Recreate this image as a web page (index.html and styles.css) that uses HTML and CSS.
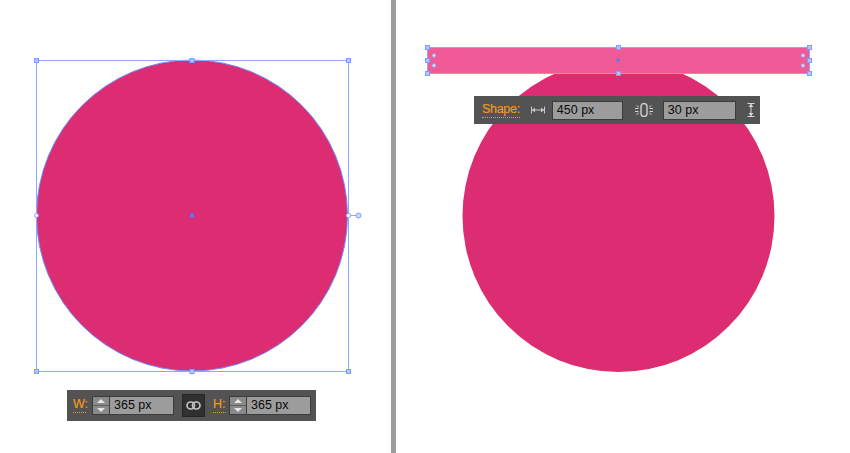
FILE: index.html
```html
<!DOCTYPE html>
<html>
<head>
<meta charset="utf-8">
<link rel="stylesheet" href="styles.css">
</head>
<body>
<div class="stage">
  <section class="panel panel-left">
    <svg class="canvas" width="391" height="453" viewBox="0 0 391 453">
      <circle cx="192" cy="215.5" r="155.5" fill="#dc2d73" stroke="#6f8cff" stroke-width="1"/>
      <rect x="36.5" y="60.5" width="312" height="311" fill="none" stroke="#8ea6ff" stroke-width="1"/>
      <line x1="348" y1="215.5" x2="358" y2="215.5" stroke="#8ea6ff" stroke-width="1"/>
      <circle cx="358.5" cy="215.5" r="2.5" fill="#cdd8ff" stroke="#7f9cff" stroke-width="1"/>
      <circle cx="348.5" cy="215.5" r="2.2" fill="#ffffff" stroke="#7f9cff" stroke-width="1"/>
      <circle cx="36.5" cy="215.5" r="2" fill="#ffffff" stroke="#7f9cff" stroke-width="1"/>
      <g fill="#b5c5ff" stroke="#7f9cff" stroke-width="1">
        <rect x="34.5" y="58.5" width="4" height="4"/>
        <rect x="190" y="58.5" width="4" height="4"/>
        <rect x="346.5" y="58.5" width="4" height="4"/>
        <rect x="34.5" y="369.5" width="4" height="4"/>
        <rect x="190" y="369.5" width="4" height="4"/>
        <rect x="346.5" y="369.5" width="4" height="4"/>
      </g>
      <rect x="190" y="213.5" width="4" height="4" fill="#4a7dff"/>
    </svg>
    <div class="toolbar toolbar-wh">
      <span class="label lab-w">W:</span>
      <span class="spinner"><span class="arr up"></span><span class="arr down"></span></span>
      <span class="field field-w">365 px</span>
      <span class="linkbtn">
        <svg width="15" height="9" viewBox="0 0 15 9"><rect x="1" y="1" width="7.5" height="7" rx="3.5" fill="none" stroke="#c4c4c4" stroke-width="1.7"/><rect x="6.5" y="1" width="7.5" height="7" rx="3.5" fill="none" stroke="#c4c4c4" stroke-width="1.7"/></svg>
      </span>
      <span class="label lab-h">H:</span>
      <span class="spinner"><span class="arr up"></span><span class="arr down"></span></span>
      <span class="field field-w">365 px</span>
    </div>
  </section>
  <div class="divider"></div>
  <section class="panel panel-right">
    <svg class="canvas" width="454" height="453" viewBox="396 0 454 453">
      <circle cx="618.5" cy="216" r="156" fill="#dc2d73"/>
      <rect x="427.5" y="47.5" width="382" height="26" fill="#f05a96" stroke="#8ea6ff" stroke-width="1"/>
      <g fill="#b5c5ff" stroke="#7f9cff" stroke-width="1">
        <rect x="425.5" y="45.5" width="4" height="4"/>
        <rect x="616.5" y="45.5" width="4" height="4"/>
        <rect x="807.5" y="45.5" width="4" height="4"/>
        <rect x="425.5" y="58.5" width="4" height="4"/>
        <rect x="807.5" y="58.5" width="4" height="4"/>
        <rect x="425.5" y="71.5" width="4" height="4"/>
        <rect x="616.5" y="71.5" width="4" height="4"/>
        <rect x="807.5" y="71.5" width="4" height="4"/>
      </g>
      <g fill="#f7d2e2" stroke="#8ea6ff" stroke-width="1">
        <circle cx="434" cy="55.5" r="1.8"/>
        <circle cx="434" cy="65.5" r="1.8"/>
        <circle cx="803" cy="55.5" r="1.8"/>
        <circle cx="803" cy="65.5" r="1.8"/>
      </g>
      <rect x="616.5" y="58.5" width="3" height="3" fill="#4a7dff"/>
    </svg>
    <div class="toolbar toolbar-shape">
      <span class="label lab-shape">Shape:</span>
      <svg class="ico ico-wid" width="14" height="8" viewBox="0 0 14 8"><path d="M0.5 0.5V7.5M13.5 0.5V7.5M1 4H13" stroke="#c8c8c8" stroke-width="1" fill="none"/><path d="M1 4L4 1.5V6.5Z M13 4L10 1.5V6.5Z" fill="#c8c8c8"/></svg>
      <span class="field field-a">450 px</span>
      <svg class="ico ico-cons" width="18" height="14" viewBox="0 0 18 14"><path d="M6 4V3.5A3 3 0 0 1 12 3.5V4 M6 10V10.5A3 3 0 0 0 12 10.5V10 M6 4V10 M12 4V10" stroke="#d2d2d2" stroke-width="1.4" fill="none"/><path d="M0 5.5H3.5M0 8.5H3.5M14.5 5.5H18M14.5 8.5H18M1.5 2.5L3.8 4M16.5 2.5L14.2 4M1.5 11.5L3.8 10M16.5 11.5L14.2 10" stroke="#d2d2d2" stroke-width="1" fill="none"/></svg>
      <span class="field field-b">30 px</span>
      <svg class="ico ico-hei" width="8" height="14" viewBox="0 0 8 14"><path d="M0.5 0.5H7.5M0.5 13.5H7.5M4 1V13" stroke="#d8d8d8" stroke-width="1" fill="none"/><path d="M4 1L1.5 4H6.5Z M4 13L1.5 10H6.5Z" fill="#d8d8d8"/></svg>
    </div>
  </section>
</div>
</body>
</html>
```

FILE: styles.css
```css
html, body {
  margin: 0;
  padding: 0;
  background: #ffffff;
}
.stage {
  display: flex;
  width: 850px;
  height: 453px;
  overflow: hidden;
}
.panel {
  position: relative;
  height: 453px;
}
.panel-left {
  width: 391px;
  background: #ffffff;
}
.panel-right {
  flex: 1;
  background: #ffffff;
}
.divider {
  width: 5px;
  height: 453px;
  background: #9c9c9c;
}
.canvas {
  display: block;
}
.toolbar {
  position: absolute;
  display: flex;
  align-items: center;
  background: #535353;
  box-sizing: border-box;
  font-family: "Liberation Sans", Arial, sans-serif;
}
.toolbar-wh {
  left: 67px;
  top: 390px;
  width: 249px;
  height: 31px;
  padding-left: 6px;
}
.toolbar-shape {
  left: 78px;
  top: 96px;
  width: 286px;
  height: 28px;
  padding-left: 8px;
}
.label {
  color: #f39a1e;
  font-size: 12.5px;
  line-height: 13px;
  border-bottom: 1px dotted #f39a1e;
  padding-bottom: 1px;
  -webkit-text-stroke: 0.15px #f39a1e;
}
.lab-w {
  width: 13px;
  margin-right: 6px;
}
.lab-h {
  width: 13px;
  margin-right: 3px;
}
.lab-shape {
  font-size: 12.5px;
  margin-right: 11px;
  letter-spacing: -0.3px;
}
.spinner {
  display: flex;
  flex-direction: column;
  width: 17px;
  height: 19px;
  box-sizing: border-box;
  border: 1px solid #3c3c3c;
  border-right: none;
  background: #8a8a8a;
}
.arr {
  flex: 1;
  display: flex;
  align-items: center;
  justify-content: center;
}
.arr.up {
  border-bottom: 1px solid #5f5f5f;
}
.arr.up::before {
  content: "";
  border-left: 4px solid transparent;
  border-right: 4px solid transparent;
  border-bottom: 4px solid #e6e6e6;
}
.arr.down::before {
  content: "";
  border-left: 4px solid transparent;
  border-right: 4px solid transparent;
  border-top: 4px solid #e6e6e6;
}
.field {
  height: 19px;
  box-sizing: border-box;
  background: #9c9c9c;
  border: 1px solid #3c3c3c;
  color: #0a0a0a;
  font-size: 12.5px;
  line-height: 17px;
  padding-left: 4px;
}
.field-w {
  width: 65px;
}
.linkbtn {
  width: 23px;
  height: 23px;
  box-sizing: border-box;
  margin: 0 8px 0 8px;
  background: #303030;
  border: 1px solid #262626;
  display: flex;
  align-items: center;
  justify-content: center;
}
.ico {
  display: block;
}
.ico-wid {
  margin-right: 7px;
}
.field-a {
  width: 71px;
  margin-right: 12px;
}
.ico-cons {
  margin-right: 10px;
}
.field-b {
  width: 73px;
  margin-right: 11px;
}
```
